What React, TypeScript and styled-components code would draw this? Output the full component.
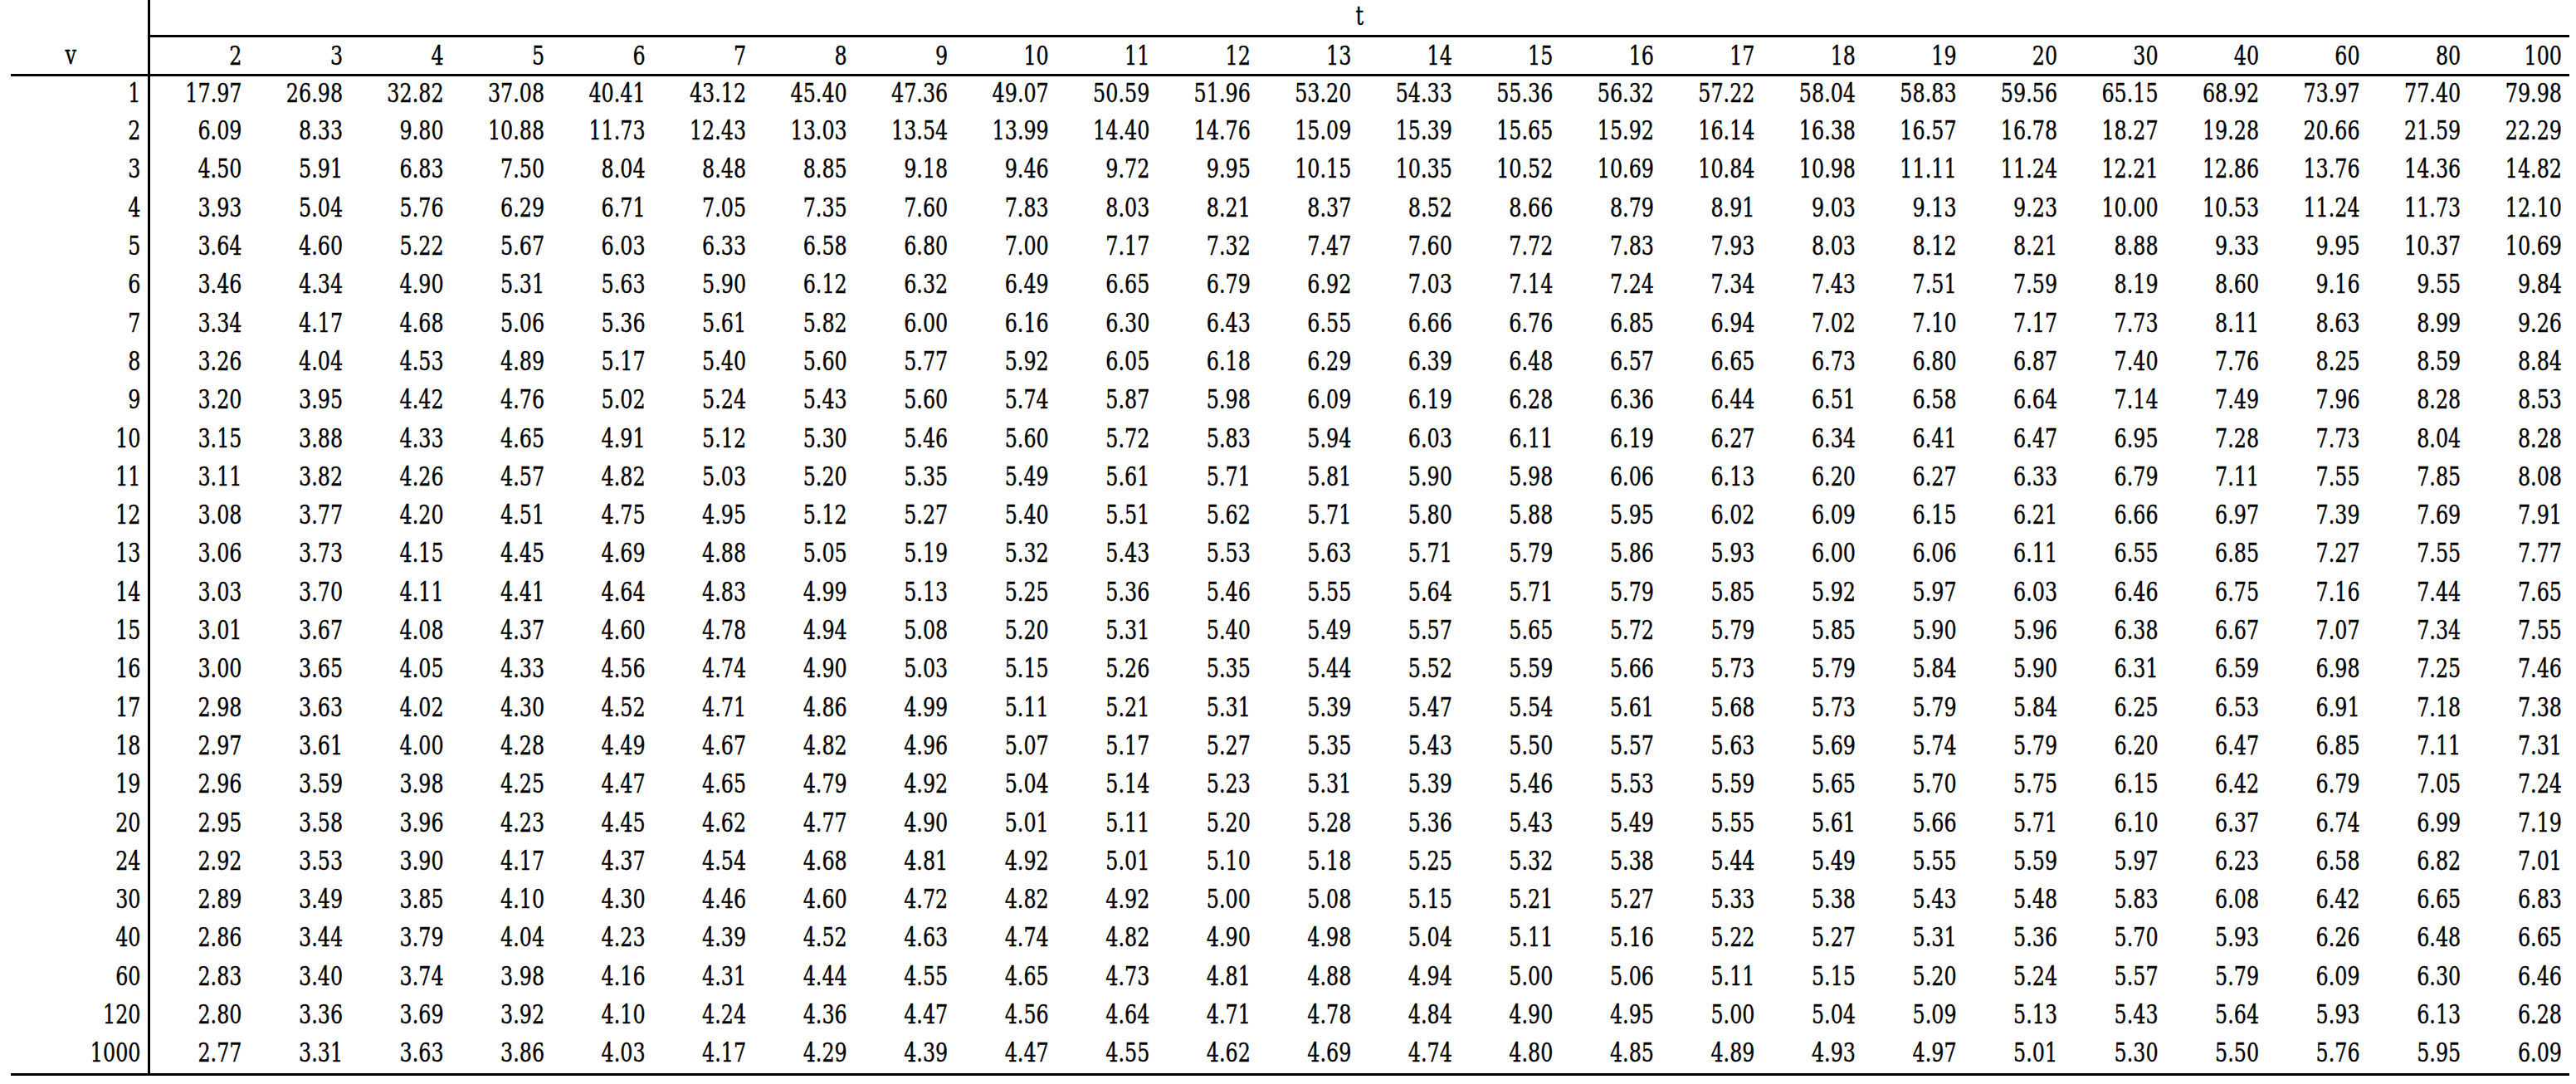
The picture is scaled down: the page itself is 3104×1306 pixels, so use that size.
import React from 'react';
import styled, { createGlobalStyle } from 'styled-components';

const tValues = ['2', '3', '4', '5', '6', '7', '8', '9', '10', '11', '12', '13', '14', '15', '16', '17', '18', '19', '20', '30', '40', '60', '80', '100'];

const rows: [string, string][] = [
  ['1', '17.97 26.98 32.82 37.08 40.41 43.12 45.40 47.36 49.07 50.59 51.96 53.20 54.33 55.36 56.32 57.22 58.04 58.83 59.56 65.15 68.92 73.97 77.40 79.98'],
  ['2', '6.09 8.33 9.80 10.88 11.73 12.43 13.03 13.54 13.99 14.40 14.76 15.09 15.39 15.65 15.92 16.14 16.38 16.57 16.78 18.27 19.28 20.66 21.59 22.29'],
  ['3', '4.50 5.91 6.83 7.50 8.04 8.48 8.85 9.18 9.46 9.72 9.95 10.15 10.35 10.52 10.69 10.84 10.98 11.11 11.24 12.21 12.86 13.76 14.36 14.82'],
  ['4', '3.93 5.04 5.76 6.29 6.71 7.05 7.35 7.60 7.83 8.03 8.21 8.37 8.52 8.66 8.79 8.91 9.03 9.13 9.23 10.00 10.53 11.24 11.73 12.10'],
  ['5', '3.64 4.60 5.22 5.67 6.03 6.33 6.58 6.80 7.00 7.17 7.32 7.47 7.60 7.72 7.83 7.93 8.03 8.12 8.21 8.88 9.33 9.95 10.37 10.69'],
  ['6', '3.46 4.34 4.90 5.31 5.63 5.90 6.12 6.32 6.49 6.65 6.79 6.92 7.03 7.14 7.24 7.34 7.43 7.51 7.59 8.19 8.60 9.16 9.55 9.84'],
  ['7', '3.34 4.17 4.68 5.06 5.36 5.61 5.82 6.00 6.16 6.30 6.43 6.55 6.66 6.76 6.85 6.94 7.02 7.10 7.17 7.73 8.11 8.63 8.99 9.26'],
  ['8', '3.26 4.04 4.53 4.89 5.17 5.40 5.60 5.77 5.92 6.05 6.18 6.29 6.39 6.48 6.57 6.65 6.73 6.80 6.87 7.40 7.76 8.25 8.59 8.84'],
  ['9', '3.20 3.95 4.42 4.76 5.02 5.24 5.43 5.60 5.74 5.87 5.98 6.09 6.19 6.28 6.36 6.44 6.51 6.58 6.64 7.14 7.49 7.96 8.28 8.53'],
  ['10', '3.15 3.88 4.33 4.65 4.91 5.12 5.30 5.46 5.60 5.72 5.83 5.94 6.03 6.11 6.19 6.27 6.34 6.41 6.47 6.95 7.28 7.73 8.04 8.28'],
  ['11', '3.11 3.82 4.26 4.57 4.82 5.03 5.20 5.35 5.49 5.61 5.71 5.81 5.90 5.98 6.06 6.13 6.20 6.27 6.33 6.79 7.11 7.55 7.85 8.08'],
  ['12', '3.08 3.77 4.20 4.51 4.75 4.95 5.12 5.27 5.40 5.51 5.62 5.71 5.80 5.88 5.95 6.02 6.09 6.15 6.21 6.66 6.97 7.39 7.69 7.91'],
  ['13', '3.06 3.73 4.15 4.45 4.69 4.88 5.05 5.19 5.32 5.43 5.53 5.63 5.71 5.79 5.86 5.93 6.00 6.06 6.11 6.55 6.85 7.27 7.55 7.77'],
  ['14', '3.03 3.70 4.11 4.41 4.64 4.83 4.99 5.13 5.25 5.36 5.46 5.55 5.64 5.71 5.79 5.85 5.92 5.97 6.03 6.46 6.75 7.16 7.44 7.65'],
  ['15', '3.01 3.67 4.08 4.37 4.60 4.78 4.94 5.08 5.20 5.31 5.40 5.49 5.57 5.65 5.72 5.79 5.85 5.90 5.96 6.38 6.67 7.07 7.34 7.55'],
  ['16', '3.00 3.65 4.05 4.33 4.56 4.74 4.90 5.03 5.15 5.26 5.35 5.44 5.52 5.59 5.66 5.73 5.79 5.84 5.90 6.31 6.59 6.98 7.25 7.46'],
  ['17', '2.98 3.63 4.02 4.30 4.52 4.71 4.86 4.99 5.11 5.21 5.31 5.39 5.47 5.54 5.61 5.68 5.73 5.79 5.84 6.25 6.53 6.91 7.18 7.38'],
  ['18', '2.97 3.61 4.00 4.28 4.49 4.67 4.82 4.96 5.07 5.17 5.27 5.35 5.43 5.50 5.57 5.63 5.69 5.74 5.79 6.20 6.47 6.85 7.11 7.31'],
  ['19', '2.96 3.59 3.98 4.25 4.47 4.65 4.79 4.92 5.04 5.14 5.23 5.31 5.39 5.46 5.53 5.59 5.65 5.70 5.75 6.15 6.42 6.79 7.05 7.24'],
  ['20', '2.95 3.58 3.96 4.23 4.45 4.62 4.77 4.90 5.01 5.11 5.20 5.28 5.36 5.43 5.49 5.55 5.61 5.66 5.71 6.10 6.37 6.74 6.99 7.19'],
  ['24', '2.92 3.53 3.90 4.17 4.37 4.54 4.68 4.81 4.92 5.01 5.10 5.18 5.25 5.32 5.38 5.44 5.49 5.55 5.59 5.97 6.23 6.58 6.82 7.01'],
  ['30', '2.89 3.49 3.85 4.10 4.30 4.46 4.60 4.72 4.82 4.92 5.00 5.08 5.15 5.21 5.27 5.33 5.38 5.43 5.48 5.83 6.08 6.42 6.65 6.83'],
  ['40', '2.86 3.44 3.79 4.04 4.23 4.39 4.52 4.63 4.74 4.82 4.90 4.98 5.04 5.11 5.16 5.22 5.27 5.31 5.36 5.70 5.93 6.26 6.48 6.65'],
  ['60', '2.83 3.40 3.74 3.98 4.16 4.31 4.44 4.55 4.65 4.73 4.81 4.88 4.94 5.00 5.06 5.11 5.15 5.20 5.24 5.57 5.79 6.09 6.30 6.46'],
  ['120', '2.80 3.36 3.69 3.92 4.10 4.24 4.36 4.47 4.56 4.64 4.71 4.78 4.84 4.90 4.95 5.00 5.04 5.09 5.13 5.43 5.64 5.93 6.13 6.28'],
  ['1000', '2.77 3.31 3.63 3.86 4.03 4.17 4.29 4.39 4.47 4.55 4.62 4.69 4.74 4.80 4.85 4.89 4.93 4.97 5.01 5.30 5.50 5.76 5.95 6.09'],
];

const GlobalStyle = createGlobalStyle`
  html, body {
    margin: 0;
    padding: 0;
    background: #fff;
  }
  body {
    font-family: "DejaVu Serif", "Liberation Serif", serif;
    font-stretch: condensed;
    color: #000;
  }
`;

const Page = styled.div`
  padding: 0 8px 0 13px;
`;

const Table = styled.table`
  width: 3083px;
  border-collapse: collapse;
  table-layout: fixed;
  font-size: 26.5px;
  line-height: 1;
`;

const StubCol = styled.col`
  width: 166px;
`;

// glyphs in the table are drawn taller than the font's natural proportions
const Tall = styled.span`
  display: inline-block;
  transform: scaleY(1.18);
  -webkit-text-stroke: 0.3px #000;
`;

const StubHead = styled.th`
  font-weight: 400;
  text-align: center;
  vertical-align: bottom;
  padding: 0 20px 10px 0;
  border-right: 3px solid #000;
  border-bottom: 3px solid #000;
`;

const SpanHead = styled.th`
  font-weight: 400;
  text-align: center;
  height: 39px;
  padding: 0 0 3px;
  vertical-align: middle;
  border-bottom: 3px solid #000;
`;

const ColHead = styled.th`
  font-weight: 400;
  text-align: right;
  height: 44px;
  padding: 0 9px 0 8px;
  border-bottom: 3px solid #000;
`;

const Row = styled.tr<{ $last?: boolean }>`
  height: 46.3px;
  & > td {
    border-bottom: ${(p) => (p.$last ? '3px solid #000' : 'none')};
  }
`;

const StubCell = styled.td`
  text-align: right;
  padding: 0 8px 5px 0;
  border-right: 3px solid #000;
`;

const Cell = styled.td`
  text-align: right;
  padding: 0 9px 5px 8px;
  white-space: nowrap;
`;

export default function App() {
  return (
    <Page>
      <GlobalStyle />
      <Table>
        <colgroup>
          <StubCol />
          {tValues.map((t) => (
            <col key={t} />
          ))}
        </colgroup>
        <thead>
          <tr>
            <StubHead rowSpan={2}>
              <Tall>v</Tall>
            </StubHead>
            <SpanHead colSpan={tValues.length}>
              <Tall>t</Tall>
            </SpanHead>
          </tr>
          <tr>
            {tValues.map((t) => (
              <ColHead key={t}>
                <Tall>{t}</Tall>
              </ColHead>
            ))}
          </tr>
        </thead>
        <tbody>
          {rows.map(([v, line], i) => (
            <Row key={v} $last={i === rows.length - 1}>
              <StubCell>
                <Tall>{v}</Tall>
              </StubCell>
              {line.split(' ').map((x, j) => (
                <Cell key={j}>
                  <Tall>{x}</Tall>
                </Cell>
              ))}
            </Row>
          ))}
        </tbody>
      </Table>
    </Page>
  );
}
